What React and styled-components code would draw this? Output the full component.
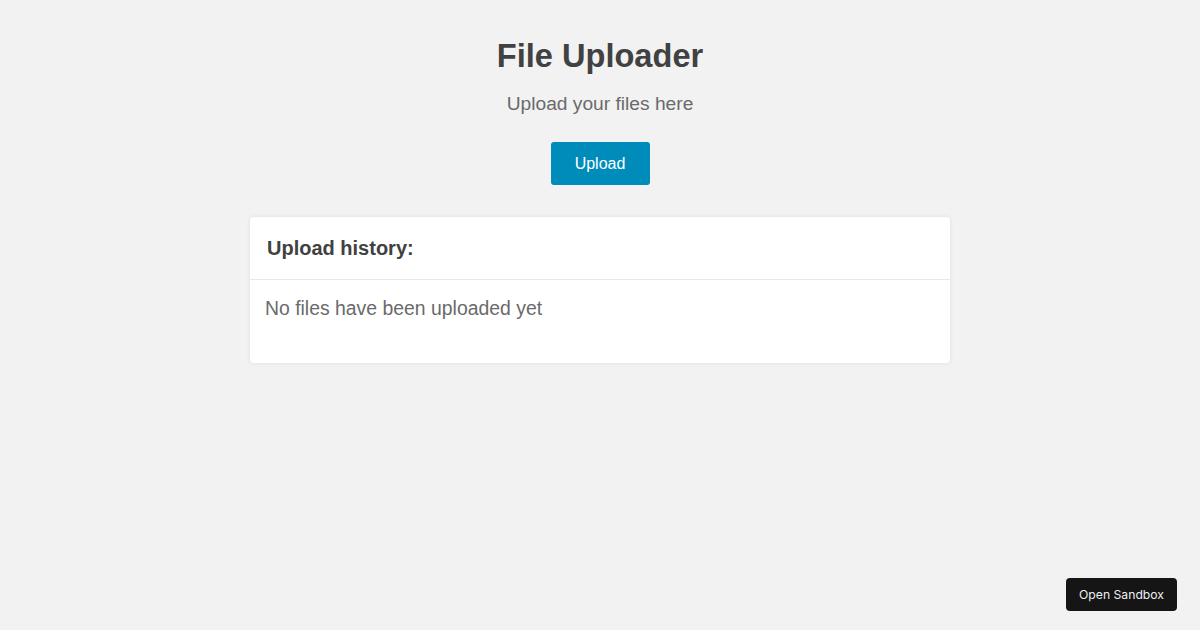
import React from "react";
import styled, { createGlobalStyle } from "styled-components";

const GlobalStyle = createGlobalStyle`
  html, body {
    margin: 0;
    padding: 0;
    background: #f2f2f2;
    font-family: "Liberation Sans", Arial, sans-serif;
  }
`;

const Page = styled.div`
  min-height: 630px;
  display: flex;
  flex-direction: column;
  align-items: center;
  padding-top: 37px;
  box-sizing: border-box;
`;

const Title = styled.h1`
  margin: 0;
  font-size: 32.6px;
  line-height: 37px;
  font-weight: 700;
  color: #414141;
`;

const Subtitle = styled.p`
  margin: 18px 0 0;
  font-size: 19.2px;
  line-height: 23px;
  color: #6a6a6a;
`;

const UploadButton = styled.button`
  margin-top: 27px;
  width: 99px;
  height: 43px;
  border: none;
  border-radius: 3px;
  background: #008cba;
  color: #fff;
  font-family: inherit;
  font-size: 16px;
  cursor: pointer;
`;

const Card = styled.section`
  margin-top: 32px;
  width: 700px;
  background: #fff;
  border-radius: 4px;
  box-shadow: 0 0 4px rgba(0, 0, 0, 0.09);
`;

const CardHeader = styled.div`
  height: 62px;
  display: flex;
  align-items: center;
  padding: 0 17px;
  border-bottom: 1px solid #e8e8e8;
  font-size: 20px;
  font-weight: 700;
  color: #414141;
`;

const CardBody = styled.div`
  padding: 17px 15px 43px;
  font-size: 19.4px;
  line-height: 23px;
  color: #6a6a6a;
`;

const SandboxButton = styled.button`
  position: fixed;
  right: 23px;
  bottom: 19px;
  height: 33px;
  padding: 0 13px;
  border: none;
  border-radius: 4px;
  background: #151515;
  color: #f0f0f0;
  font-family: Inter, "Liberation Sans", sans-serif;
  font-size: 12.2px;
  cursor: pointer;
`;

export default function App() {
  return (
    <>
      <GlobalStyle />
      <Page>
        <Title>File Uploader</Title>
        <Subtitle>Upload your files here</Subtitle>
        <UploadButton>Upload</UploadButton>
        <Card>
          <CardHeader>Upload history:</CardHeader>
          <CardBody>No files have been uploaded yet</CardBody>
        </Card>
      </Page>
      <SandboxButton>Open Sandbox</SandboxButton>
    </>
  );
}
